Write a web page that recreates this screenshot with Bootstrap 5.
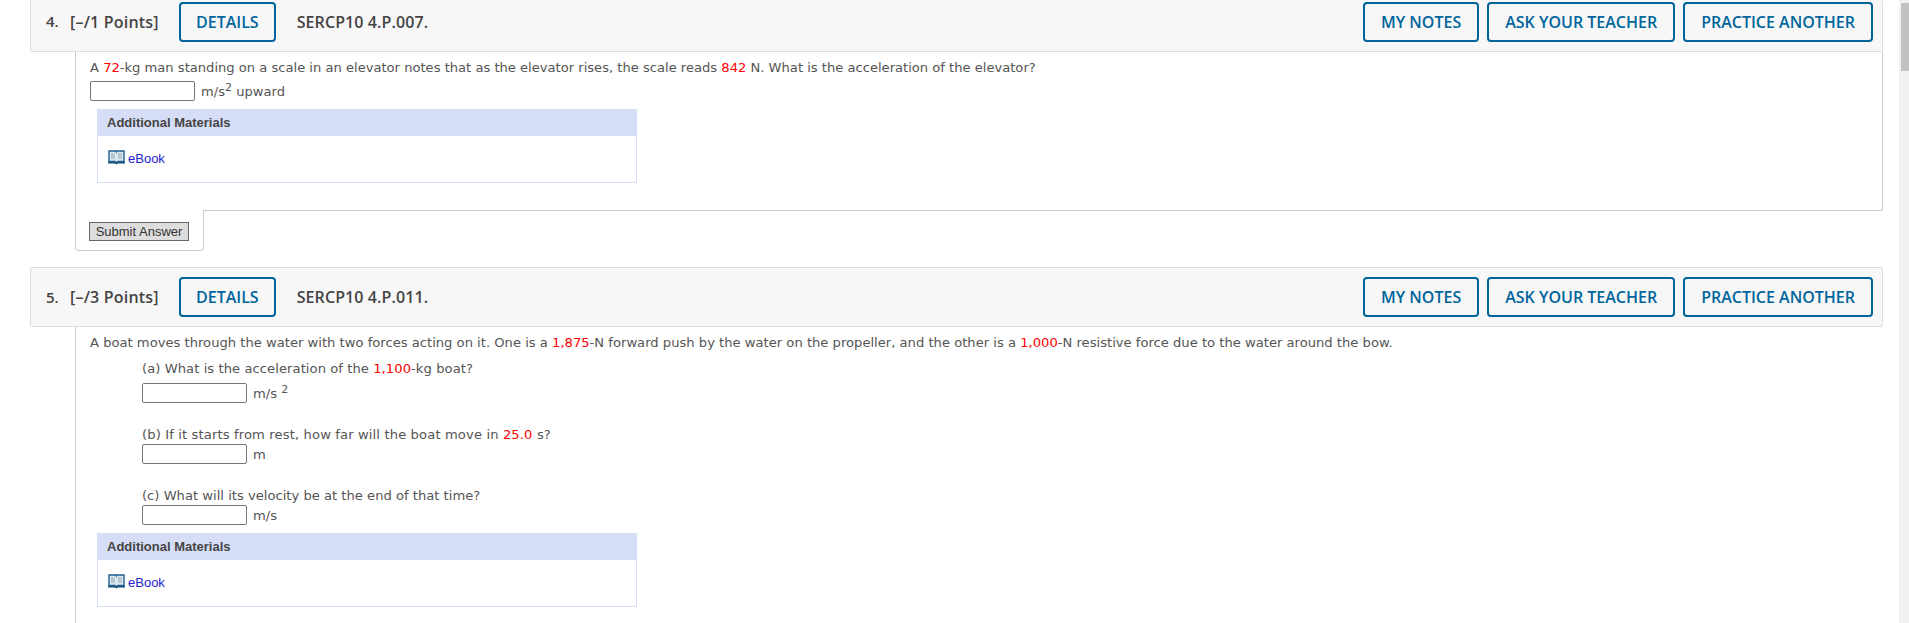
<!DOCTYPE html>
<html lang="en"><head><meta charset="utf-8"><title>Questions</title>
<link href="https://cdn.jsdelivr.net/npm/bootstrap@5.3.0/dist/css/bootstrap.min.css" rel="stylesheet">
<style>
html,body{height:623px;overflow:hidden;background:#fff}
.shell{height:623px}
.mainpane{flex:1 1 auto;min-width:0;padding:0 16px 0 30px}
.railbar{flex:0 0 10px;background:#f1f1f1;padding:3px 0 0 2px}
.railthumb{height:68px;background:#c1c1c1}
.qhead{background:#f7f7f7;border:1px solid #ddd;border-radius:2px;height:60px;padding:0 9px 0 15px;font-family:"Open Sans",sans-serif;font-weight:600;font-size:16px;color:#444}
.qhead-first{height:52px;border-top:0;padding-top:1px;align-items:flex-start!important}
.qhead-first>*{margin-top:1px}
.qhead-first>span{margin-top:9px}
.qnum{width:24px;font-size:15px}
.qpts{width:109px;letter-spacing:.2px}
.qcode{margin-left:21px;letter-spacing:.1px}
.wbtn{height:40px;padding:0 16px;line-height:36px;border:2px solid #00659c;border-radius:4px;background:#f7f7f7;color:#00659c;font-family:"Open Sans",sans-serif;font-weight:600;font-size:16px;white-space:nowrap}
.wbtn:hover{background:#f7f7f7;color:#00659c;border-color:#00659c}
.wbtn-tight{padding:0 15px}
.qbody{margin-left:45px;border-left:1px solid #ccc;padding-left:14px;font-family:"DejaVu Sans",sans-serif;font-size:13.1px;color:#555;line-height:18px}
.qbody-first{border-right:1px solid #ccc;border-bottom:1px solid #ccc;border-radius:0 0 3px 0;height:159px}
.hot{color:#f00}
.ansbox{width:105px;height:20px;border:1px solid #767676;border-radius:2px;background:#fff;padding:0;margin-right:6px;display:block;flex:none}
.ptext{padding-top:7px}
.ptext-a{padding-top:8px;letter-spacing:.06px}
.ptext-b{letter-spacing:.12px}
.ansline{margin-top:4px;height:20px;line-height:22px;white-space:nowrap}
.ansline-a{margin-top:5px}
.ansline-b{margin-top:0}
.ansline sup{font-size:11px;top:-5px;line-height:0}
.matbox{margin:8px 0 0 7px;width:540px;height:74px;border:1px solid #d6def7;font-family:"Liberation Sans",sans-serif;font-size:13px}
.mathead{background:#d6def7;height:27px;line-height:28px;padding-left:10px;font-weight:700;color:#444;margin:-1px -1px 0}
.matbody{padding:14px 0 0 10px;line-height:16px}
.matbody a{color:#2222cc;text-decoration:none}
.bookicon{width:17px;height:15px;vertical-align:-2px;margin-right:3px}
.tabfoot{position:relative;margin:-1px 0 0 45px;width:129px;height:41px;border:1px solid #ccc;border-top:0;border-radius:0 0 4px 4px;padding:12px 0 0 13px;background:#fff}
.subbtn{display:block;width:100px;height:19px;padding:0;background:#ddd;border:1px solid #666;border-radius:0;font-family:"Liberation Sans",sans-serif;font-size:13px;line-height:17px;color:#333}
.qbody2{height:297px;font-size:13.14px}
.subq{margin-left:52px}
.qgap{height:16px}
</style></head><body>
<div class="d-flex shell">
<div class="mainpane">
  <div class="qhead qhead-first d-flex align-items-center">
    <span class="qnum">4.</span><span class="qpts">[–/1 Points]</span>
    <button class="btn wbtn wbtn-tight" type="button">DETAILS</button>
    <span class="qcode">SERCP10 4.P.007.</span>
    <div class="ms-auto d-flex gap-2">
      <button class="btn wbtn" type="button">MY NOTES</button>
      <button class="btn wbtn" type="button">ASK YOUR TEACHER</button>
      <button class="btn wbtn" type="button">PRACTICE ANOTHER</button>
    </div>
  </div>
  <div class="qbody qbody-first">
    <div class="ptext">A <span class="hot">72</span>-kg man standing on a scale in an elevator notes that as the elevator rises, the scale reads <span class="hot">842</span> N. What is the acceleration of the elevator?</div>
    <div class="ansline d-flex"><input class="ansbox" type="text" aria-label="answer"><span>m/s<sup>2</sup> upward</span></div>
    <div class="matbox">
      <div class="mathead">Additional Materials</div>
      <div class="matbody"><svg class="bookicon" viewBox="0 0 17 15"><path d="M1 1h7l.5 1 .5-1h7v10.500h-6L8.500 13 7 11.500H1z" fill="#dfe9f0" stroke="#1d5f94" stroke-width="1.400"/><path d="M3 4h4M3 6h4M3 8h4M10 4h4M10 6h4M10 8h4" stroke="#8aa5ba"/><path d="M0 12h17v1.500H10l-1.500 1-1.500-1H0z" fill="#17527f"/></svg><a href="#">eBook</a></div>
    </div>
  </div>
  <div class="tabfoot"><button class="subbtn" type="button">Submit Answer</button></div>
  <div class="qhead d-flex align-items-center mt-3">
    <span class="qnum">5.</span><span class="qpts">[–/3 Points]</span>
    <button class="btn wbtn wbtn-tight" type="button">DETAILS</button>
    <span class="qcode">SERCP10 4.P.011.</span>
    <div class="ms-auto d-flex gap-2">
      <button class="btn wbtn" type="button">MY NOTES</button>
      <button class="btn wbtn" type="button">ASK YOUR TEACHER</button>
      <button class="btn wbtn" type="button">PRACTICE ANOTHER</button>
    </div>
  </div>
  <div class="qbody qbody2">
    <div class="ptext">A boat moves through the water with two forces acting on it. One is a <span class="hot">1,875</span>-N forward push by the water on the propeller, and the other is a <span class="hot">1,000</span>-N resistive force due to the water around the bow.</div>
    <div class="subq">
      <div class="ptext ptext-a">(a) What is the acceleration of the <span class="hot">1,100</span>-kg boat?</div>
      <div class="ansline ansline-a d-flex"><input class="ansbox" type="text" aria-label="a"><span>m/s <sup>2</sup></span></div>
      <div class="qgap"></div>
      <div class="ptext ptext-b">(b) If it starts from rest, how far will the boat move in <span class="hot">25.0</span> s?</div>
      <div class="ansline ansline-b d-flex"><input class="ansbox" type="text" aria-label="b"><span>m</span></div>
      <div class="qgap"></div>
      <div class="ptext">(c) What will its velocity be at the end of that time?</div>
      <div class="ansline ansline-b d-flex"><input class="ansbox" type="text" aria-label="c"><span>m/s</span></div>
    </div>
    <div class="matbox">
      <div class="mathead">Additional Materials</div>
      <div class="matbody"><svg class="bookicon" viewBox="0 0 17 15"><path d="M1 1h7l.5 1 .5-1h7v10.500h-6L8.500 13 7 11.500H1z" fill="#dfe9f0" stroke="#1d5f94" stroke-width="1.400"/><path d="M3 4h4M3 6h4M3 8h4M10 4h4M10 6h4M10 8h4" stroke="#8aa5ba"/><path d="M0 12h17v1.500H10l-1.500 1-1.500-1H0z" fill="#17527f"/></svg><a href="#">eBook</a></div>
    </div>
  </div>
</div>
<div class="railbar"><div class="railthumb"></div></div>
</div>
</body></html>
